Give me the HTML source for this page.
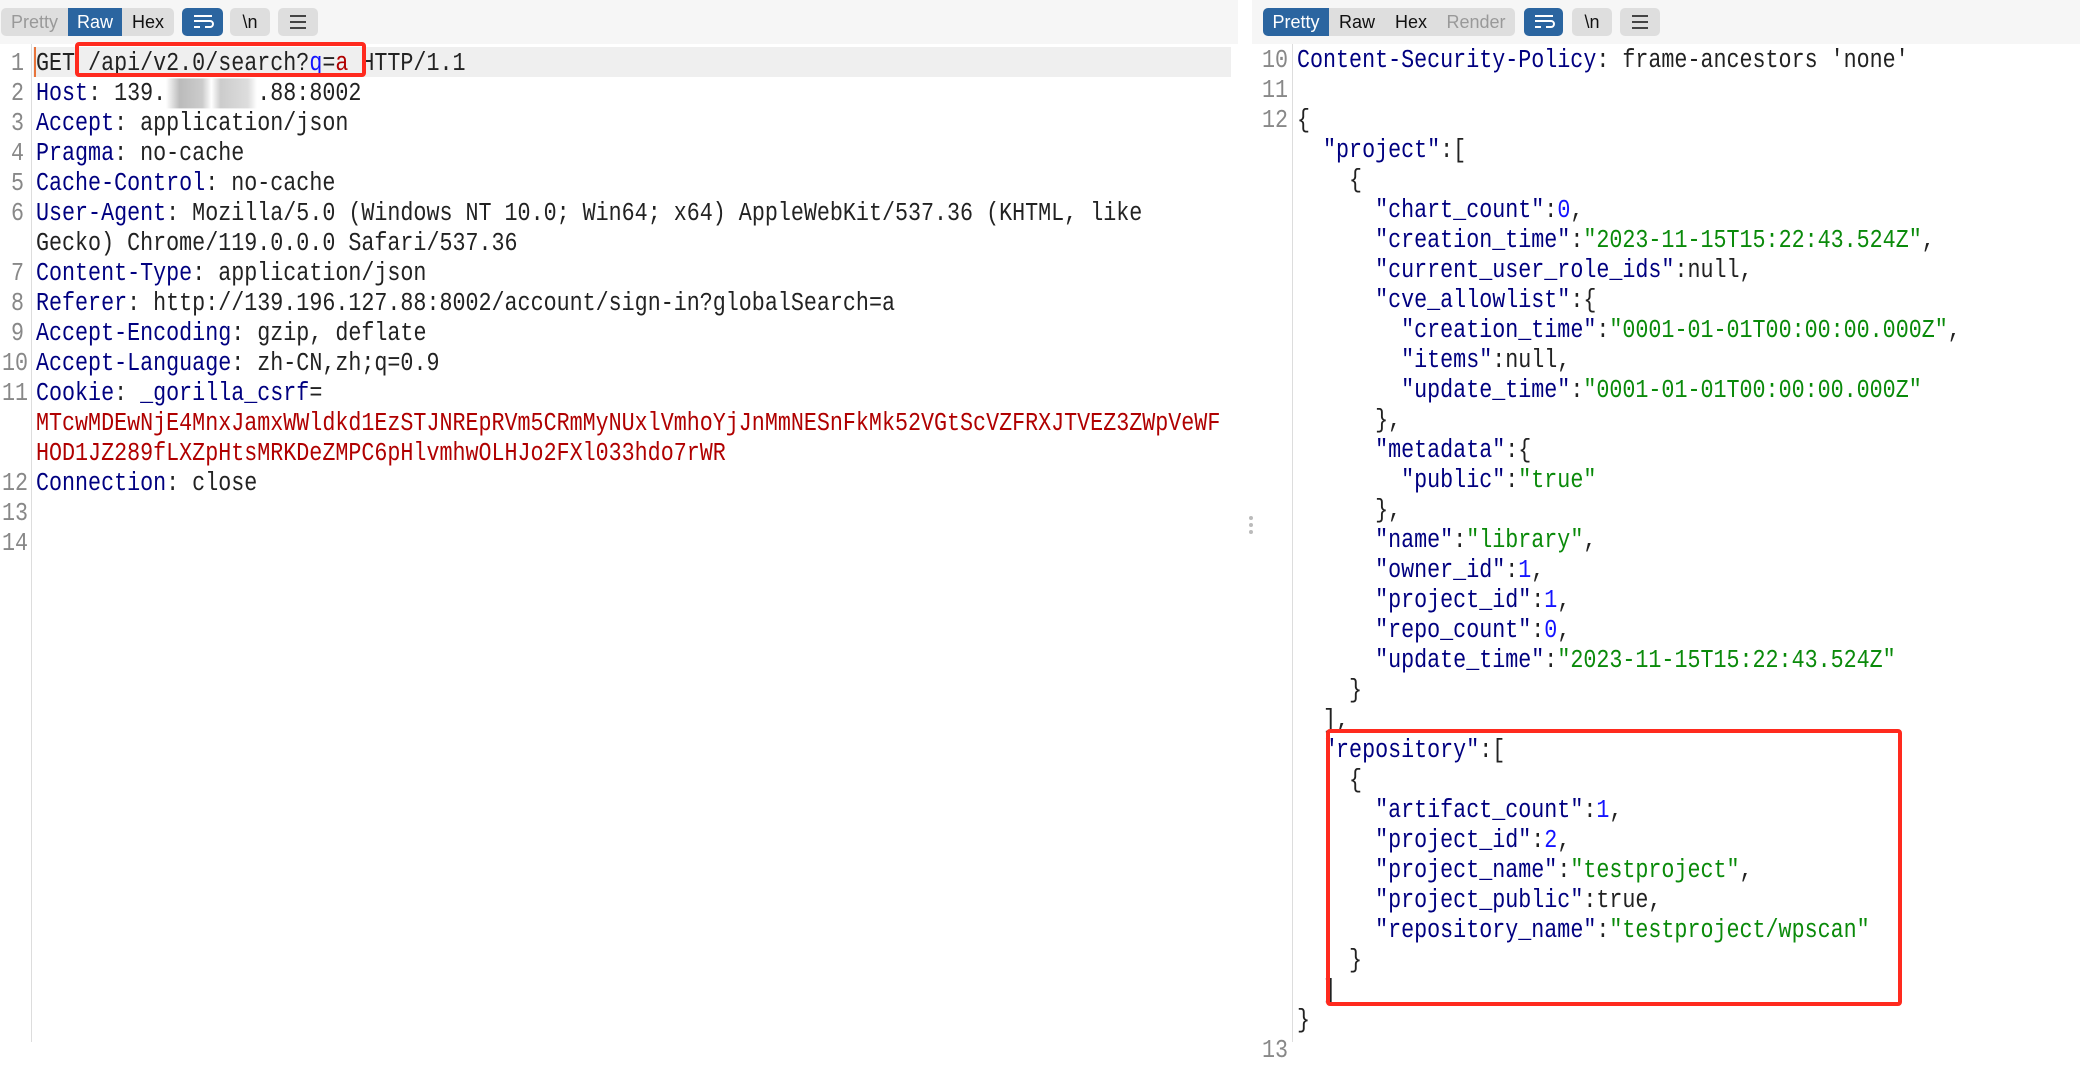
<!DOCTYPE html>
<html><head><meta charset="utf-8"><style>
*{margin:0;padding:0;box-sizing:border-box}
body{width:2080px;height:1042px;background:#fff;position:relative;overflow:hidden;font-family:"Liberation Mono",monospace}
.tb{position:absolute;top:0;height:44px;background:#f6f6f6}
.btn{position:absolute;top:8px;height:28px;background:#dedede;font-family:"Liberation Sans",sans-serif;font-size:18px;line-height:28px;text-align:center;color:#111}
.sel{background:#2b65a0;color:#fff}
.gr{color:#999}
.r{position:absolute;height:30px;line-height:30px;font-size:21.7px;white-space:pre;transform:scaleY(1.2);transform-origin:50% 50%;color:#222;margin-top:3px}
.n{position:absolute;height:30px;line-height:30px;font-size:21.7px;color:#888;text-align:right;transform:scaleY(1.2);margin-top:3px}
.k{color:#000080}.s{color:#0a8a0a}.d{color:#1414ff}.c{color:#b00000}
.vl{position:absolute;width:1px;background:#ddd}
.box{position:absolute;border:4px solid #ff2a1e;border-radius:4px}
</style></head><body>
<div class="tb" style="left:0;width:1238px"></div>
<div class="tb" style="left:1252px;width:828px"></div>
<div class="btn gr" style="left:1px;width:67px;border-radius:5px 0 0 5px">Pretty</div>
<div class="btn sel" style="left:68px;width:54px">Raw</div>
<div class="btn" style="left:122px;width:52px;border-radius:0 5px 5px 0">Hex</div>
<div class="btn sel" style="left:182px;width:41px;border-radius:5px"><svg width="24" height="20" viewBox="0 0 24 20" style="margin-top:4px"><path d="M3 4h18M3 9h16a3 3 0 0 1 0 6h-5M3 15h6" stroke="#fff" stroke-width="2" fill="none"/></svg></div>
<div class="btn" style="left:230px;width:40px;border-radius:5px">\n</div>
<div class="btn" style="left:278px;width:40px;border-radius:5px"><svg width="22" height="18" viewBox="0 0 22 18" style="margin-top:5px"><path d="M3 3h16M3 9h16M3 15h16" stroke="#444" stroke-width="2"/></svg></div>

<div class="btn sel" style="left:1263px;width:66px;border-radius:5px 0 0 5px">Pretty</div>
<div class="btn" style="left:1329px;width:56px">Raw</div>
<div class="btn" style="left:1385px;width:52px">Hex</div>
<div class="btn gr" style="left:1437px;width:78px;border-radius:0 5px 5px 0">Render</div>
<div class="btn sel" style="left:1524px;width:39px;border-radius:5px"><svg width="24" height="20" viewBox="0 0 24 20" style="margin-top:4px"><path d="M3 4h18M3 9h16a3 3 0 0 1 0 6h-5M3 15h6" stroke="#fff" stroke-width="2" fill="none"/></svg></div>
<div class="btn" style="left:1572px;width:40px;border-radius:5px">\n</div>
<div class="btn" style="left:1620px;width:40px;border-radius:5px"><svg width="22" height="18" viewBox="0 0 22 18" style="margin-top:5px"><path d="M3 3h16M3 9h16M3 15h16" stroke="#444" stroke-width="2"/></svg></div>

<!-- left panel -->
<div class="vl" style="left:31px;top:44px;height:998px"></div>
<div style="position:absolute;left:33px;top:47px;width:1198px;height:30px;background:#efefef"></div>
<div style="position:absolute;left:34px;top:47px;width:2px;height:30px;background:#e8743b"></div>
<div class="n" style="left:0;width:24px;top:46px">1</div>
<div class="r" style="left:36px;top:46px">GET /api/v2.0/search?<span class="d">q</span>=<span class="c">a</span> HTTP/1.1</div>
<div class="n" style="left:0;width:24px;top:76px">2</div>
<div class="r" style="left:36px;top:76px"><span class="k">Host</span>: 139.<span style="color:transparent;background:linear-gradient(90deg,#fff 0,#bbb 15%,#ccc 40%,#fff 50%,#ccc 60%,#ddd 90%,#fff)">196.127</span>.88:8002</div>
<div class="n" style="left:0;width:24px;top:106px">3</div>
<div class="r" style="left:36px;top:106px"><span class="k">Accept</span>: application/json</div>
<div class="n" style="left:0;width:24px;top:136px">4</div>
<div class="r" style="left:36px;top:136px"><span class="k">Pragma</span>: no-cache</div>
<div class="n" style="left:0;width:24px;top:166px">5</div>
<div class="r" style="left:36px;top:166px"><span class="k">Cache-Control</span>: no-cache</div>
<div class="n" style="left:0;width:24px;top:196px">6</div>
<div class="r" style="left:36px;top:196px"><span class="k">User-Agent</span>: Mozilla/5.0 (Windows NT 10.0; Win64; x64) AppleWebKit/537.36 (KHTML, like</div>
<div class="r" style="left:36px;top:226px">Gecko) Chrome/119.0.0.0 Safari/537.36</div>
<div class="n" style="left:0;width:24px;top:256px">7</div>
<div class="r" style="left:36px;top:256px"><span class="k">Content-Type</span>: application/json</div>
<div class="n" style="left:0;width:24px;top:286px">8</div>
<div class="r" style="left:36px;top:286px"><span class="k">Referer</span>: http://139.196.127.88:8002/account/sign-in?globalSearch=a</div>
<div class="n" style="left:0;width:24px;top:316px">9</div>
<div class="r" style="left:36px;top:316px"><span class="k">Accept-Encoding</span>: gzip, deflate</div>
<div class="n" style="left:0;width:28px;top:346px">10</div>
<div class="r" style="left:36px;top:346px"><span class="k">Accept-Language</span>: zh-CN,zh;q=0.9</div>
<div class="n" style="left:0;width:28px;top:376px">11</div>
<div class="r" style="left:36px;top:376px"><span class="k">Cookie</span>: <span class="k">_gorilla_csrf</span>=</div>
<div class="r c" style="left:36px;top:406px">MTcwMDEwNjE4MnxJamxWWldkd1EzSTJNREpRVm5CRmMyNUxlVmhoYjJnMmNESnFkMk52VGtScVZFRXJTVEZ3ZWpVeWF</div>
<div class="r c" style="left:36px;top:436px">HOD1JZ289fLXZpHtsMRKDeZMPC6pHlvmhwOLHJo2FXl033hdo7rWR</div>
<div class="n" style="left:0;width:28px;top:466px">12</div>
<div class="r" style="left:36px;top:466px"><span class="k">Connection</span>: close</div>
<div class="n" style="left:0;width:28px;top:496px">13</div>
<div class="n" style="left:0;width:28px;top:526px">14</div>
<div class="box" style="left:75px;top:42px;width:291px;height:35px"></div>

<!-- divider dots -->
<div style="position:absolute;left:1249px;top:516px;width:4px;height:4px;border-radius:2px;background:#bbb"></div>
<div style="position:absolute;left:1249px;top:523px;width:4px;height:4px;border-radius:2px;background:#bbb"></div>
<div style="position:absolute;left:1249px;top:530px;width:4px;height:4px;border-radius:2px;background:#bbb"></div>

<!-- right panel -->
<div class="vl" style="left:1292px;top:44px;height:998px"></div>
<div class="n" style="left:1256px;width:32px;top:43px">10</div>
<div class="r" style="left:1297px;top:43px"><span class="k">Content-Security-Policy</span>: frame-ancestors 'none'</div>
<div class="n" style="left:1256px;width:32px;top:73px">11</div>
<div class="n" style="left:1256px;width:32px;top:103px">12</div>
<div class="r" style="left:1297px;top:103px">{</div>
<div class="r" style="left:1297px;top:133px">  <span class="k">"project"</span>:[</div>
<div class="r" style="left:1297px;top:163px">    {</div>
<div class="r" style="left:1297px;top:193px">      <span class="k">"chart_count"</span>:<span class="d">0</span>,</div>
<div class="r" style="left:1297px;top:223px">      <span class="k">"creation_time"</span>:<span class="s">"2023-11-15T15:22:43.524Z"</span>,</div>
<div class="r" style="left:1297px;top:253px">      <span class="k">"current_user_role_ids"</span>:null,</div>
<div class="r" style="left:1297px;top:283px">      <span class="k">"cve_allowlist"</span>:{</div>
<div class="r" style="left:1297px;top:313px">        <span class="k">"creation_time"</span>:<span class="s">"0001-01-01T00:00:00.000Z"</span>,</div>
<div class="r" style="left:1297px;top:343px">        <span class="k">"items"</span>:null,</div>
<div class="r" style="left:1297px;top:373px">        <span class="k">"update_time"</span>:<span class="s">"0001-01-01T00:00:00.000Z"</span></div>
<div class="r" style="left:1297px;top:403px">      },</div>
<div class="r" style="left:1297px;top:433px">      <span class="k">"metadata"</span>:{</div>
<div class="r" style="left:1297px;top:463px">        <span class="k">"public"</span>:<span class="s">"true"</span></div>
<div class="r" style="left:1297px;top:493px">      },</div>
<div class="r" style="left:1297px;top:523px">      <span class="k">"name"</span>:<span class="s">"library"</span>,</div>
<div class="r" style="left:1297px;top:553px">      <span class="k">"owner_id"</span>:<span class="d">1</span>,</div>
<div class="r" style="left:1297px;top:583px">      <span class="k">"project_id"</span>:<span class="d">1</span>,</div>
<div class="r" style="left:1297px;top:613px">      <span class="k">"repo_count"</span>:<span class="d">0</span>,</div>
<div class="r" style="left:1297px;top:643px">      <span class="k">"update_time"</span>:<span class="s">"2023-11-15T15:22:43.524Z"</span></div>
<div class="r" style="left:1297px;top:673px">    }</div>
<div class="r" style="left:1297px;top:703px">  ],</div>
<div class="r" style="left:1297px;top:733px">  <span class="k">"repository"</span>:[</div>
<div class="r" style="left:1297px;top:763px">    {</div>
<div class="r" style="left:1297px;top:793px">      <span class="k">"artifact_count"</span>:<span class="d">1</span>,</div>
<div class="r" style="left:1297px;top:823px">      <span class="k">"project_id"</span>:<span class="d">2</span>,</div>
<div class="r" style="left:1297px;top:853px">      <span class="k">"project_name"</span>:<span class="s">"testproject"</span>,</div>
<div class="r" style="left:1297px;top:883px">      <span class="k">"project_public"</span>:true,</div>
<div class="r" style="left:1297px;top:913px">      <span class="k">"repository_name"</span>:<span class="s">"testproject/wpscan"</span></div>
<div class="r" style="left:1297px;top:943px">    }</div>
<div class="r" style="left:1297px;top:973px">  ]</div>
<div class="r" style="left:1297px;top:1003px">}</div>
<div class="n" style="left:1256px;width:32px;top:1033px">13</div>
<div class="box" style="left:1326px;top:729px;width:576px;height:277px"></div>
</body></html>
